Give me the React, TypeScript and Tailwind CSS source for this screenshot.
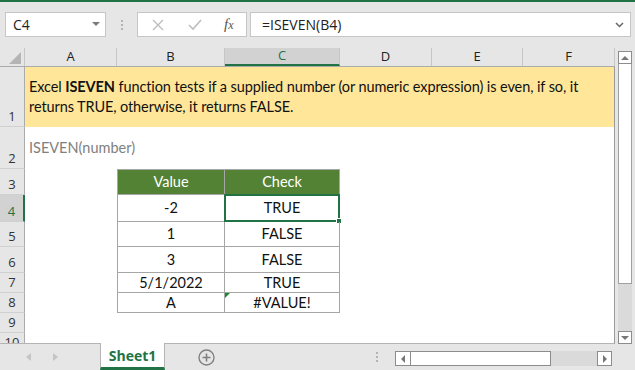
const ui = { fontFamily: '"Open Sans", "Noto Sans", sans-serif' };
const cell = { fontFamily: 'Lato, "Liberation Sans", sans-serif' };

const cols = [
  { label: "A", cls: "w-[92px]" },
  { label: "B", cls: "w-[108px]" },
  { label: "C", cls: "w-[115px]", active: true },
  { label: "D", cls: "w-[92px]" },
  { label: "E", cls: "w-[91px]" },
  { label: "F", cls: "w-[92px]" },
];

const data = [
  { n: 4, h: "h-[27px]", value: "-2", check: "TRUE", selected: true },
  { n: 5, h: "h-[25px]", value: "1", check: "FALSE" },
  { n: 6, h: "h-[26px]", value: "3", check: "FALSE" },
  { n: 7, h: "h-[20px]", value: "5/1/2022", check: "TRUE" },
  { n: 8, h: "h-[20px]", value: "A", check: "#VALUE!", error: true },
];

function RowHead({ n, active }: { n: number; active?: boolean }) {
  return (
    <div
      style={ui}
      className={
        "w-[25px] shrink-0 flex items-end justify-center pb-[1px] text-[13px] leading-[18px] border-b border-[#d0d0d0] " +
        (active
          ? "bg-[#d2d2d2] text-[#217346] border-r-2 border-r-[#217346]"
          : "bg-[#e6e6e6] text-[#333] border-r border-r-[#ababab]")
      }
    >
      {n}
    </div>
  );
}

export default function App() {
  return (
    <div className="w-[635px] h-[370px] bg-[#e6e6e6] flex flex-col overflow-hidden select-none">
      <div className="h-[2px] bg-[#217346]" />

      {/* formula bar */}
      <div className="h-[46px] flex items-start pt-[10px] pl-[5px]" style={ui}>
        <div className="w-[101px] h-[25px] bg-white border border-[#c6c6c6] flex items-center justify-between pl-[7px] pr-[5px] text-[14px] text-[#222]">
          <span>C4</span>
          <svg width="8" height="5" viewBox="0 0 8 5">
            <path d="M0 0h8L4 4z" fill="#7a7a7a" />
          </svg>
        </div>
        <div className="w-[31px] h-[25px] flex flex-col items-center justify-center gap-[2px]">
          <span className="w-[2px] h-[2px] bg-[#b3b3b3]" />
          <span className="w-[2px] h-[2px] bg-[#b3b3b3]" />
          <span className="w-[2px] h-[2px] bg-[#b3b3b3]" />
        </div>
        <div className="w-[110px] h-[25px] bg-white border border-[#c6c6c6] flex items-center pl-[14px]">
          <svg width="12" height="12" viewBox="0 0 12 12">
            <path d="M1 1l10 10M11 1L1 11" stroke="#bdbdbd" strokeWidth="1.4" />
          </svg>
          <svg width="14" height="12" viewBox="0 0 14 12" className="ml-[24px]">
            <path d="M1 6l4 4 8-9" stroke="#bdbdbd" strokeWidth="1.6" fill="none" />
          </svg>
          <span
            className="ml-[22px] text-[15px] italic text-[#555]"
            style={{ fontFamily: '"Liberation Serif", serif' }}
          >
            f<span className="text-[12px]">x</span>
          </span>
        </div>
        <div className="ml-[3px] w-[381px] h-[25px] bg-white border border-[#c6c6c6] flex items-center justify-between pl-[11px] pr-[6px] text-[14px] text-[#222]">
          <span>=ISEVEN(B4)</span>
          <svg width="9" height="6" viewBox="0 0 9 6">
            <path d="M1 1l3.5 3.5L8 1" stroke="#666" strokeWidth="1.5" fill="none" />
          </svg>
        </div>
      </div>

      {/* grid + vertical scrollbar */}
      <div className="flex h-[296px]">
        <div className="w-[615px] flex flex-col">
          <div className="h-[19px] flex border-b border-[#ababab]" style={ui}>
            <div className="w-[25px] shrink-0 flex items-end justify-end pr-[3px] pb-[2px] border-r border-[#c6c6c6]">
              <svg width="12" height="12" viewBox="0 0 12 12">
                <path d="M12 0v12H0z" fill="#b4b4b4" />
              </svg>
            </div>
            {cols.map((c) => (
              <div
                key={c.label}
                className={
                  c.cls +
                  " shrink-0 flex items-center justify-center text-[13px] border-r border-[#c6c6c6] " +
                  (c.active
                    ? "bg-[#d2d2d2] text-[#217346] border-b-2 border-b-[#217346]"
                    : "text-[#222]")
                }
              >
                {c.label}
              </div>
            ))}
          </div>

          <div className="flex-1 flex flex-col overflow-hidden bg-white border-r border-[#9a9a9a] border-b border-b-[#b4b4b4]">
            <div className="h-[60px] flex shrink-0">
              <RowHead n={1} />
              <div
                className="flex-1 bg-[#ffe699] flex items-center pl-[4px] pr-[12px] text-[14.5px] leading-[20px] tracking-[-0.1px] text-[#111]"
                style={cell}
              >
                <p>
                  Excel <b>ISEVEN</b> function tests if a supplied number (or numeric expression) is even, if so, it returns TRUE, otherwise, it returns FALSE.
                </p>
              </div>
            </div>
            <div className="h-[42px] flex shrink-0">
              <RowHead n={2} />
              <div className="flex-1 flex items-center pl-[4px] text-[14.5px] text-[#808080]" style={cell}>
                ISEVEN(number)
              </div>
            </div>
            <div className="h-[26px] flex shrink-0">
              <RowHead n={3} />
              <div className="w-[92px] shrink-0" />
              <div
                className="w-[108px] shrink-0 bg-[#548235] text-white text-[14.5px] flex items-center justify-center border border-[#a6a6a6]"
                style={cell}
              >
                Value
              </div>
              <div
                className="w-[115px] shrink-0 bg-[#548235] text-white text-[14.5px] flex items-center justify-center border-y border-r border-[#a6a6a6]"
                style={cell}
              >
                Check
              </div>
            </div>
            {data.map((r) => (
              <div key={r.n} className={r.h + " flex shrink-0"}>
                <RowHead n={r.n} active={r.selected} />
                <div className="w-[92px] shrink-0" />
                <div
                  className="w-[108px] shrink-0 text-[14.5px] text-[#111] flex items-center justify-center border-x border-b border-[#a6a6a6]"
                  style={cell}
                >
                  {r.value}
                </div>
                <div
                  className="relative w-[115px] shrink-0 text-[14.5px] text-[#111] flex items-center justify-center border-r border-b border-[#a6a6a6]"
                  style={cell}
                >
                  {r.check}
                  {r.selected && (
                    <div className="absolute -top-[1px] -left-[1px] -right-[1px] -bottom-[1px] border-2 border-[#217346]">
                      <div className="absolute -right-[4px] -bottom-[4px] w-[6px] h-[6px] bg-[#217346] border border-white" />
                    </div>
                  )}
                  {r.error && (
                    <svg width="5" height="5" viewBox="0 0 5 5" className="absolute top-0 left-0">
                      <path d="M0 0h5L0 5z" fill="#1a8a2e" />
                    </svg>
                  )}
                </div>
              </div>
            ))}
            <div className="h-[20px] flex shrink-0">
              <RowHead n={9} />
            </div>
            <div className="h-[20px] flex shrink-0">
              <RowHead n={10} />
            </div>
          </div>
        </div>

        {/* vertical scrollbar */}
        <div className="w-[20px] pl-[3px] pr-[3px] pt-[3px] flex flex-col">
          <div className="h-[13px] bg-white border border-[#8c8c8c] flex items-center justify-center">
            <svg width="8" height="4" viewBox="0 0 8 4">
              <path d="M0 4h8L4 0z" fill="#777" />
            </svg>
          </div>
          <div className="h-[220px] bg-white border border-[#a0a0a0] border-t-0" />
          <div className="flex-1 bg-[#dadada]" />
          <div className="h-[13px] bg-white border border-[#8c8c8c] flex items-center justify-center">
            <svg width="8" height="4" viewBox="0 0 8 4">
              <path d="M0 0h8L4 4z" fill="#777" />
            </svg>
          </div>
        </div>
      </div>

      {/* sheet tabs */}
      <div className="h-[26px] flex items-stretch" style={ui}>
        <div className="w-[100px] flex items-center pl-[26px] gap-[22px]">
          <svg width="5" height="8" viewBox="0 0 5 8">
            <path d="M5 0v8L0 4z" fill="#c4c4c4" />
          </svg>
          <svg width="5" height="8" viewBox="0 0 5 8">
            <path d="M0 0v8l5-4z" fill="#c4c4c4" />
          </svg>
        </div>
        <div className="w-[65px] bg-white border-x border-[#b4b4b4] border-b-[3px] border-b-[#217346] -mt-[1px] flex items-center justify-center text-[14px] font-bold text-[#217346]">
          Sheet1
        </div>
        <div className="w-[82px] flex items-center justify-center">
          <svg width="17" height="17" viewBox="0 0 17 17">
            <circle cx="8.5" cy="8.5" r="7.5" stroke="#808080" strokeWidth="1.4" fill="none" />
            <path d="M8.5 4.5v8M4.5 8.5h8" stroke="#808080" strokeWidth="1.6" />
          </svg>
        </div>
        <div className="w-[133px] flex flex-col items-end justify-center gap-[2px] pr-[2px]">
          <span className="w-[2px] h-[2px] bg-[#b3b3b3]" />
          <span className="w-[2px] h-[2px] bg-[#b3b3b3]" />
          <span className="w-[2px] h-[2px] bg-[#b3b3b3]" />
        </div>
        <div className="ml-[15px] mt-[7px] h-[15px] w-[217px] flex bg-[#dadada]">
          <div className="w-[16px] bg-white border border-[#8c8c8c] flex items-center justify-center">
            <svg width="4" height="8" viewBox="0 0 4 8">
              <path d="M4 0v8L0 4z" fill="#777" />
            </svg>
          </div>
          <div className="w-[140px] bg-white border-y border-r border-[#8c8c8c]" />
          <div className="flex-1" />
          <div className="w-[15px] bg-white border border-[#8c8c8c] flex items-center justify-center">
            <svg width="4" height="8" viewBox="0 0 4 8">
              <path d="M0 0v8l4-4z" fill="#777" />
            </svg>
          </div>
        </div>
      </div>
    </div>
  );
}
